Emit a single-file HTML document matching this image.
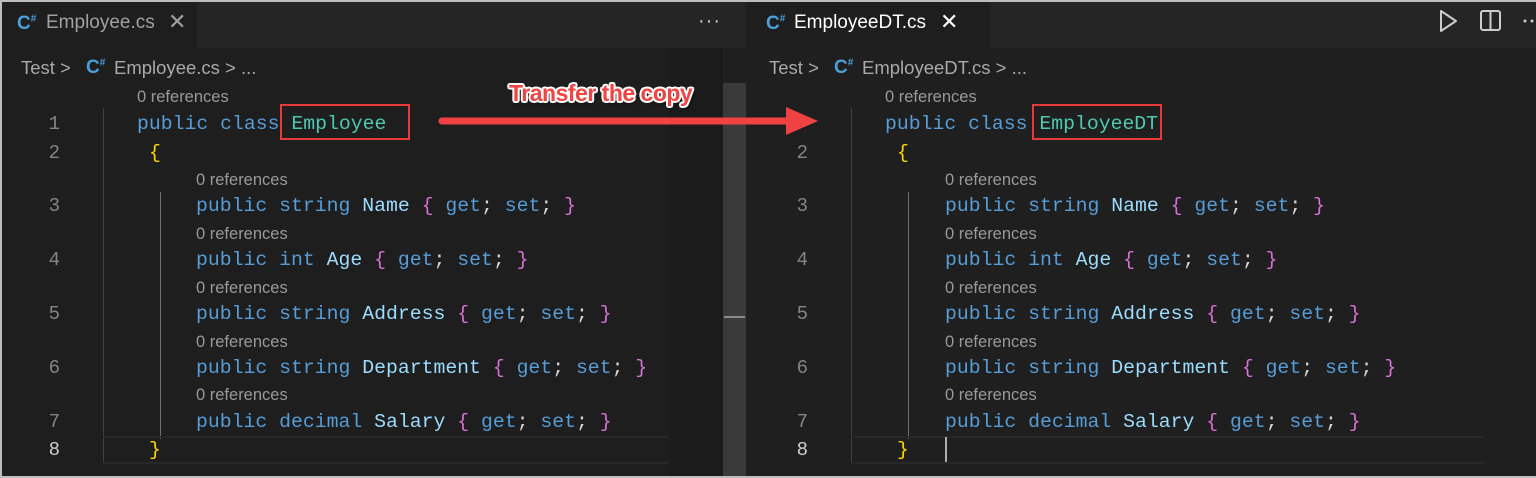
<!DOCTYPE html>
<html><head><meta charset="utf-8">
<style>
*{margin:0;padding:0;box-sizing:border-box}
body{width:1536px;height:478px;overflow:hidden;background:#1f1f1f;position:relative;font-family:"Liberation Sans",sans-serif}
.a{position:absolute;white-space:pre}
.code{font-family:"Liberation Mono",monospace;font-size:19.8px;line-height:27px;color:#d4d4d4;margin-top:2px}
.ref{font-family:"Liberation Sans",sans-serif;font-size:16.5px;color:#999;line-height:27px;margin-top:1px}
.num{font-family:"Liberation Mono",monospace;font-size:19px;color:#858585;width:40px;text-align:right;line-height:27px;margin-top:2px}
.k{color:#569cd6}.c{color:#4ec9b0}.p{color:#9cdcfe}.m{color:#da70d6}.y{color:#ffd700}
.g{position:absolute;width:1px;background:#404040}
.cs{font-weight:bold;color:#4a9fd8;font-size:19px}
.cs sup{font-size:10px}
</style></head><body>
<div class="a" style="left:0;top:0;width:1536px;height:478px;border:2px solid #bdbdbd;border-right:none;z-index:20;pointer-events:none"></div>
<div class="a" style="left:0;top:0;width:746px;height:48px;background:#252526"></div>
<div class="a" style="left:0;top:0;width:197px;height:48px;background:#1e1e1e"></div>
<div class="a" style="left:746px;top:0;width:790px;height:48px;background:#252526"></div>
<div class="a" style="left:746px;top:0;width:244px;height:48px;background:#1e1e1e"></div>
<div class="a" style="left:0;top:48px;width:669px;height:430px;background:#1e1e1e"></div>
<div class="a" style="left:669px;top:48px;width:54px;height:430px;background:#1b1b1b"></div>
<div class="a" style="left:723px;top:83px;width:23px;height:395px;background:#3a3a3a"></div>
<div class="a" style="left:724px;top:316px;width:21px;height:2px;background:#8a8a8a"></div>
<div class="a cs" style="left:17px;top:13px">C<sup>#</sup></div>
<div class="a" style="left:46px;top:12px;font-size:19px;color:#a0a0a0">Employee.cs</div>
<div class="a" style="left:168px;top:9px;font-size:22px;color:#a0a0a0">✕</div>
<div class="a" style="left:698px;top:10px;font-size:20px;color:#ccc;letter-spacing:1px">···</div>
<div class="a cs" style="left:766px;top:13px">C<sup>#</sup></div>
<div class="a" style="left:794px;top:12px;font-size:19px;color:#fff">EmployeeDT.cs</div>
<div class="a" style="left:940px;top:9px;font-size:22px;color:#fff">✕</div>
<svg class="a" style="left:1436px;top:8px" width="100" height="28">
<path d="M5 3 L20 13 L5 23 Z" fill="none" stroke="#ccc" stroke-width="2" stroke-linejoin="round"/>
<rect x="45" y="3" width="19" height="19" rx="2" fill="none" stroke="#ccc" stroke-width="2"/>
<line x1="54.5" y1="3" x2="54.5" y2="22" stroke="#ccc" stroke-width="2"/>
<circle cx="89" cy="13" r="1.5" fill="#ccc"/><circle cx="96" cy="13" r="1.5" fill="#ccc"/>
</svg>
<div class="a" style="left:21px;top:57px;font-size:18.5px;color:#a9a9a9">Test <span style="font-size:18px">&gt;</span></div>
<div class="a cs" style="left:86px;top:57px">C<sup>#</sup></div>
<div class="a" style="left:114px;top:57px;font-size:18.5px;color:#a9a9a9">Employee.cs &gt; ...</div>
<div class="a" style="left:769px;top:57px;font-size:18.5px;color:#a9a9a9">Test &gt;</div>
<div class="a cs" style="left:834px;top:57px">C<sup>#</sup></div>
<div class="a" style="left:862px;top:57px;font-size:18.5px;color:#a9a9a9">EmployeeDT.cs &gt; ...</div>

<div class="g" style="left:103px;top:108px;height:356px"></div>
<div class="g" style="left:160px;top:192px;height:247px;background:#707070"></div>
<div class="a" style="left:103px;top:436px;width:566px;height:28px;border-top:2px solid #282828;border-bottom:2px solid #282828"></div>
<div class="a num" style="left:20px;top:109px">1</div>
<div class="a num" style="left:20px;top:138px">2</div>
<div class="a num" style="left:20px;top:191px">3</div>
<div class="a num" style="left:20px;top:245px">4</div>
<div class="a num" style="left:20px;top:299px">5</div>
<div class="a num" style="left:20px;top:353px">6</div>
<div class="a num" style="left:20px;top:407px">7</div>
<div class="a num" style="left:20px;top:435px;color:#d0d0d0">8</div>
<div class="a ref" style="left:137px;top:83px">0 references</div>
<div class="a code" style="left:137px;top:109px"><span class="k">public</span> <span class="k">class</span> <span class="c">Employee</span></div>
<div class="a" style="left:280px;top:104px;width:130px;height:36px;border:2px solid #e8393b"></div>
<div class="a code y" style="left:149px;top:138px">{</div>
<div class="a ref" style="left:196px;top:166px">0 references</div>
<div class="a code" style="left:196px;top:191px"><span class="k">public</span> <span class="k">string</span> <span class="p">Name</span> <span class="m">{</span> <span class="k">get</span>; <span class="k">set</span>; <span class="m">}</span></div>
<div class="a ref" style="left:196px;top:220px">0 references</div>
<div class="a code" style="left:196px;top:245px"><span class="k">public</span> <span class="k">int</span> <span class="p">Age</span> <span class="m">{</span> <span class="k">get</span>; <span class="k">set</span>; <span class="m">}</span></div>
<div class="a ref" style="left:196px;top:274px">0 references</div>
<div class="a code" style="left:196px;top:299px"><span class="k">public</span> <span class="k">string</span> <span class="p">Address</span> <span class="m">{</span> <span class="k">get</span>; <span class="k">set</span>; <span class="m">}</span></div>
<div class="a ref" style="left:196px;top:328px">0 references</div>
<div class="a code" style="left:196px;top:353px"><span class="k">public</span> <span class="k">string</span> <span class="p">Department</span> <span class="m">{</span> <span class="k">get</span>; <span class="k">set</span>; <span class="m">}</span></div>
<div class="a ref" style="left:196px;top:381px">0 references</div>
<div class="a code" style="left:196px;top:407px"><span class="k">public</span> <span class="k">decimal</span> <span class="p">Salary</span> <span class="m">{</span> <span class="k">get</span>; <span class="k">set</span>; <span class="m">}</span></div>
<div class="a code y" style="left:149px;top:435px">}</div>

<div class="g" style="left:851px;top:108px;height:356px"></div>
<div class="g" style="left:908px;top:192px;height:247px;background:#707070"></div>
<div class="a" style="left:851px;top:436px;width:634px;height:28px;border-top:2px solid #282828;border-bottom:2px solid #282828"></div>
<div class="a" style="left:945px;top:437px;width:2px;height:25px;background:#aeafad"></div>
<div class="a num" style="left:768px;top:138px">2</div>
<div class="a num" style="left:768px;top:191px">3</div>
<div class="a num" style="left:768px;top:245px">4</div>
<div class="a num" style="left:768px;top:299px">5</div>
<div class="a num" style="left:768px;top:353px">6</div>
<div class="a num" style="left:768px;top:407px">7</div>
<div class="a num" style="left:768px;top:435px;color:#d0d0d0">8</div>
<div class="a ref" style="left:885px;top:83px">0 references</div>
<div class="a code" style="left:885px;top:109px"><span class="k">public</span> <span class="k">class</span> <span class="c">EmployeeDT</span></div>
<div class="a" style="left:1032px;top:104px;width:130px;height:36px;border:2px solid #e8393b"></div>
<div class="a code y" style="left:897px;top:138px">{</div>
<div class="a ref" style="left:945px;top:166px">0 references</div>
<div class="a code" style="left:945px;top:191px"><span class="k">public</span> <span class="k">string</span> <span class="p">Name</span> <span class="m">{</span> <span class="k">get</span>; <span class="k">set</span>; <span class="m">}</span></div>
<div class="a ref" style="left:945px;top:220px">0 references</div>
<div class="a code" style="left:945px;top:245px"><span class="k">public</span> <span class="k">int</span> <span class="p">Age</span> <span class="m">{</span> <span class="k">get</span>; <span class="k">set</span>; <span class="m">}</span></div>
<div class="a ref" style="left:945px;top:274px">0 references</div>
<div class="a code" style="left:945px;top:299px"><span class="k">public</span> <span class="k">string</span> <span class="p">Address</span> <span class="m">{</span> <span class="k">get</span>; <span class="k">set</span>; <span class="m">}</span></div>
<div class="a ref" style="left:945px;top:328px">0 references</div>
<div class="a code" style="left:945px;top:353px"><span class="k">public</span> <span class="k">string</span> <span class="p">Department</span> <span class="m">{</span> <span class="k">get</span>; <span class="k">set</span>; <span class="m">}</span></div>
<div class="a ref" style="left:945px;top:381px">0 references</div>
<div class="a code" style="left:945px;top:407px"><span class="k">public</span> <span class="k">decimal</span> <span class="p">Salary</span> <span class="m">{</span> <span class="k">get</span>; <span class="k">set</span>; <span class="m">}</span></div>
<div class="a code y" style="left:897px;top:435px">}</div>

<svg class="a" style="left:430px;top:100px;z-index:10" width="400" height="40">
<line x1="12" y1="21" x2="368" y2="21" stroke="#f04242" stroke-width="7" stroke-linecap="round"/>
<path d="M356 7 L388 21 L356 35 Z" fill="#f04242"/>
</svg>
<div class="a" style="left:509px;top:80px;font-size:23px;font-weight:bold;color:#f04545;letter-spacing:-0.5px;z-index:10;text-shadow:-2px 0 #fff,2px 0 #fff,0 -2px #fff,0 2px #fff,-1.5px -1.5px #fff,1.5px 1.5px #fff,-1.5px 1.5px #fff,1.5px -1.5px #fff,2px 3px 3px rgba(0,0,0,.6)">Transfer the copy</div>
</body></html>
